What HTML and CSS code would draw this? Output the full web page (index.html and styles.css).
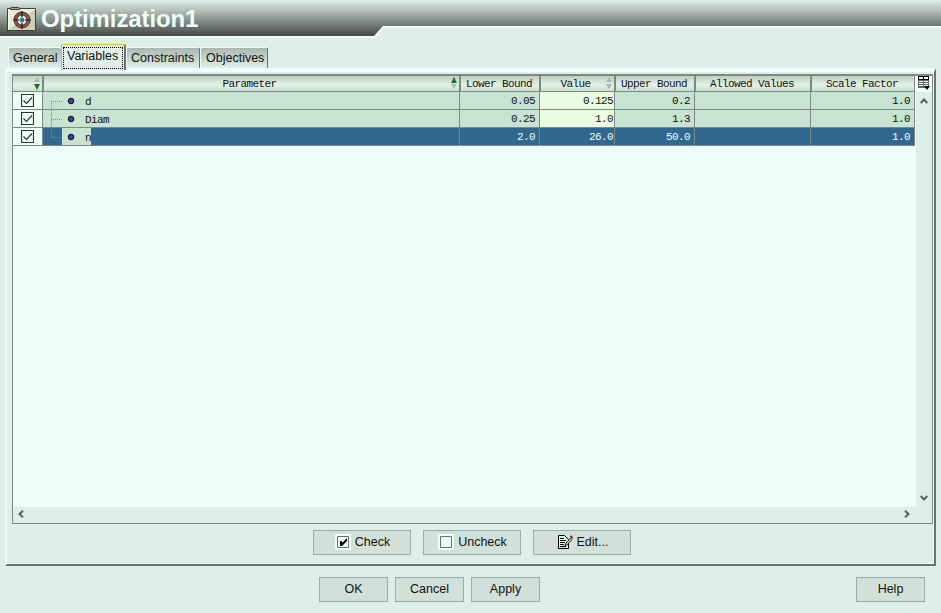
FILE: index.html
```html
<!DOCTYPE html>
<html lang="en">
<head>
  <meta charset="UTF-8">
  <title>Optimization1</title>
  <link rel="stylesheet" href="styles.css">
</head>
<body>
  <header class="banner">
    <div class="banner-fill">
      <svg class="logo" width="30" height="25" viewBox="0 0 30 25">
        <path d="M1 2h27v22H1z" fill="#e6ecd8"/>
        <path d="M1 23L28 2v22H1z" fill="#cbd0b4"/>
        <path d="M1.500 23V2.500H28" fill="none" stroke="#f2f7e4"/>
        <path d="M.5 24V1.500H28.500V23.500H.5" fill="none" stroke="#3e4038"/>
        <path d="M3.500 2.500V1l1-.5h7l1 .5v1.500z" fill="#b5a86f" stroke="#3c3a30"/>
        <circle cx="15" cy="13" r="6.500" fill="#e8f4ee" stroke="#5c3634" stroke-width="4"/>
        <circle cx="15" cy="13" r="6.500" fill="none" stroke="#8d5550" stroke-width="2"/>
        <circle cx="15" cy="13" r="2.500" fill="#467898"/>
        <path d="M15 4v6M15 16v6M6 13h6M18 13h6" stroke="#111" stroke-width="1.200"/>
      </svg>
      <h1>Optimization1</h1>
    </div>
  </header>

  <nav class="tabs">
    <div class="tab general">General</div>
    <div class="tab active"><span>Variables</span></div>
    <div class="tab constraints">Constraints</div>
    <div class="tab objectives">Objectives</div>
  </nav>

  <main class="panel">
    <div class="table-box">
      <div class="grid">
        <div class="row head">
          <div class="sort"><svg width="6" height="13" viewBox="0 0 6 13"><path d="M3 0l3 5H0z" fill="#a9bab2"/><path d="M0 7h6l-3 6z" fill="#246b2c"/></svg></div>
          <div>Parameter<svg width="6" height="13" viewBox="0 0 6 13"><path d="M3 0l3 6H0z" fill="#246b2c"/><path d="M0 7h6l-3 5z" fill="#a9bab2"/></svg></div>
          <div>Lower Bound</div>
          <div>Value<svg width="6" height="13" viewBox="0 0 6 13"><path d="M3 0l3 5H0zM0 7h6l-3 5z" fill="#a9bab2"/></svg></div>
          <div>Upper Bound</div>
          <div>Allowed Values</div>
          <div>Scale Factor</div>
        </div>
        <div class="row">
          <div class="check"><svg width="13" height="13" viewBox="0 0 13 13"><path d="M.5.5h12v12H.5z"/><path d="M2.500 6.500l3 3 5.500-6"/></svg></div>
          <div class="name"><svg width="36" height="17" viewBox="0 0 36 17"><path class="tree" d="M8.500 9v8M8 9.500h11"/><circle cx="28" cy="9" r="2.800"/></svg><span>d</span></div>
          <div>0.05</div>
          <div class="value">0.125</div>
          <div>0.2</div>
          <div></div>
          <div>1.0</div>
        </div>
        <div class="row">
          <div class="check"><svg width="13" height="13" viewBox="0 0 13 13"><path d="M.5.5h12v12H.5z"/><path d="M2.500 6.500l3 3 5.500-6"/></svg></div>
          <div class="name"><svg width="36" height="17" viewBox="0 0 36 17"><path class="tree" d="M8.500 0v17M8 9.500h11"/><circle cx="28" cy="9" r="2.800"/></svg><span>Diam</span></div>
          <div>0.25</div>
          <div class="value">1.0</div>
          <div>1.3</div>
          <div></div>
          <div>1.0</div>
        </div>
        <div class="row selected">
          <div class="check"><svg width="13" height="13" viewBox="0 0 13 13"><path d="M.5.5h12v12H.5z"/><path d="M2.500 6.500l3 3 5.500-6"/></svg></div>
          <div class="name"><svg width="36" height="17" viewBox="0 0 36 17"><path class="back" d="M19 0h17v17H19z"/><path class="tree" d="M8.500 0v9M8 9.500h11"/><circle cx="28" cy="9" r="2.800"/></svg><span>n</span></div>
          <div>2.0</div>
          <div class="value">26.0</div>
          <div>50.0</div>
          <div></div>
          <div>1.0</div>
        </div>
      </div>
      <div class="side">
        <svg class="columns" width="12" height="14" viewBox="0 0 12 14">
          <path d="M0 0h11v4H0z" fill="#000"/>
          <path d="M0 4h11v8H0z" fill="#5f6663"/>
          <path d="M1 1h4v2H1zM6 1h4v2H6zM1 5h4v1H1zM6 5h4v1H6zM1 7h4v1H1zM6 7h4v1H6zM1 9h4v1H1zM6 9h4v1H6z" fill="#eefff8"/>
          <path d="M6 10h6l-3 4z" fill="#000"/>
        </svg>
        <div class="vscroll">
          <svg width="8" height="6" viewBox="0 0 8 6"><path d="M.7 5L4 1.500 7.300 5"/></svg>
          <svg width="8" height="6" viewBox="0 0 8 6"><path d="M.7 1L4 4.500 7.300 1"/></svg>
        </div>
      </div>
      <div class="hscroll">
        <svg width="6" height="8" viewBox="0 0 6 8"><path d="M5 .7L1.500 4 5 7.300"/></svg>
        <svg width="6" height="8" viewBox="0 0 6 8"><path d="M1 .7L4.500 4 1 7.300"/></svg>
      </div>
    </div>
    <div class="actions">
      <button>
        <svg width="16" height="16" viewBox="0 0 16 16"><path d="M0 0h16v16H0z" fill="#eefff8"/><path d="M2.500 2.500h11v11h-11z" fill="none" stroke="#67706c"/><path d="M5 7v5h2l5-5V4L7 9V7z" fill="#000"/></svg>
        Check
      </button>
      <button>
        <svg width="16" height="16" viewBox="0 0 16 16"><path d="M0 0h16v16H0z" fill="#eefff8"/><path d="M2.500 2.500h11v11h-11z" fill="none" stroke="#67706c"/></svg>
        Uncheck
      </button>
      <button>
        <svg width="16" height="16" viewBox="0 0 16 16"><path d="M1.500 1.500h6l4 4v9h-10z" fill="#dfefe8" stroke="#000"/><path d="M3 4.500h4M3 6.500h6M3 8.500h5M3 10.500h4M3 12.500h6" stroke="#000"/><path d="M8 12l1-3 4.500-5 1.500 1.500-5 5.500z" fill="#c9ceb0" stroke="#000" stroke-width=".8"/><path d="M13.500 3.500l2-1" stroke="#8c2442" stroke-width="3"/></svg>
        Edit...
      </button>
    </div>
  </main>

  <footer class="buttons">
    <button>OK</button>
    <button>Cancel</button>
    <button>Apply</button>
    <button class="help">Help</button>
  </footer>
</body>
</html>
```

FILE: styles.css
```css
* {
  box-sizing: border-box;
}
body {
  margin: 0;
  height: 613px;
  overflow: hidden;
  background: #dfefe8;
  color: #111;
  font-family: "Liberation Sans", Arial, sans-serif;
  font-size: 12.5px;
}
svg {
  display: block;
  flex: none;
}
.banner {
  height: 38px;
  background: #eefff8;
  clip-path: polygon(0 0, 100% 0, 100% 28px, 384px 28px, 375px 38px, 0 38px);
}
.banner-fill {
  display: flex;
  height: 36px;
  padding: 7px 0 0 7px;
  background: linear-gradient(#dfefe8, #454846);
  clip-path: polygon(0 0, 100% 0, 100% 26px, 383px 26px, 374px 36px, 0 36px);
}
h1 {
  margin: -2px 0 0 4px;
  color: #eefff8;
  font-size: 24px;
  letter-spacing: -0.1px;
  line-height: 28px;
}
.tabs {
  display: flex;
  align-items: flex-end;
  height: 30px;
  padding-left: 8px;
}
.tab {
  height: 21px;
  padding-left: 5px;
  border-top: 1px solid #eefff8;
  border-left: 1px solid #eefff8;
  border-right: 1px solid #68736e;
  border-radius: 2px 2px 0 0;
  background: linear-gradient(#a9b7b0, #dfefe8);
  line-height: 20px;
  white-space: nowrap;
}
.general {
  width: 53px;
  padding-left: 4px;
  border-right: 0;
}
.constraints {
  width: 74px;
  padding-left: 4px;
}
.objectives {
  width: 68px;
  padding-left: 5px;
}
.active {
  z-index: 1;
  width: 65px;
  height: 26px;
  margin-bottom: -2px;
  padding: 2px 1px;
  border-top: 1px solid #d1bc56;
  border-left: 1px solid #d1bc56;
  border-right: 2px solid #68736e;
  background: #dfefe8;
}
.active span {
  display: block;
  height: 22px;
  padding-left: 3px;
  border: 1px dotted #000;
  line-height: 16px;
}
.panel {
  width: 931px;
  height: 498px;
  margin-left: 5px;
  padding: 2px 1px 0 5px;
  border-top: 4px solid #eefff8;
  border-left: 2px solid #eefff8;
  border-right: 2px solid #68736e;
  border-bottom: 2px solid #68736e;
  box-shadow: inset -1px -1px #eefff8;
}
.table-box {
  display: grid;
  grid-template: 431px 16px / 902px 17px;
  width: 921px;
  border: 1px solid #7c8985;
  border-top-width: 2px;
  background: #eefff8;
}
.row {
  display: grid;
  grid-template: 18px / 30px 417px 80px 75px 80px 116px 104px;
  font-family: "Liberation Mono", monospace;
  font-size: 11px;
  letter-spacing: -0.6px;
  line-height: 18px;
}
.row > div {
  padding-right: 4px;
  border-right: 1px solid #7c8985;
  border-bottom: 1px solid #7c8985;
  background: #c7e3d1;
  text-align: right;
}
.row.head {
  grid-template-rows: 16px;
  line-height: 17px;
}
.head > div {
  display: flex;
  justify-content: center;
  padding: 0 2px 0 0;
  border-left: 1px solid #7c8985;
  background: linear-gradient(#bdcfbf, #e3f2e7 60%, #cbdccf);
}
.head > .sort {
  border-left: 0;
}
.head svg {
  margin: 1px 0 0 auto;
}
/* keep the label centred beside its sort arrows */
.head > div:not(.sort):has(svg)::before {
  content: "";
  margin-right: auto;
  width: 4px;
}
.row > .value {
  padding-right: 1px;
  background: #eafde0;
}
.row > .check {
  padding: 2px 0 0 8px;
  background: #eefff8;
}
.check path {
  fill: none;
  stroke: #333;
  stroke-width: 1.2;
}
.row > .name {
  display: flex;
}
.name span {
  height: 17px;
  padding-left: 6px;
  line-height: 20px;
}
.name circle {
  fill: #3a3f9c;
  stroke: #111;
}
.tree {
  stroke: #7c8985;
  stroke-dasharray: 1 1;
}
.selected > div:not(.check) {
  background: #30688f;
  color: #eefff8;
}
.selected .name span {
  background: #c7e3d1;
  color: #111;
}
.back {
  fill: #c7e3d1;
}
.side {
  display: flex;
  flex-direction: column;
}
.columns {
  margin: 0 0 2px 3px;
}
.vscroll {
  display: flex;
  flex: 1;
  flex-direction: column;
  justify-content: space-between;
  margin-left: 1px;
  padding: 6px 0 6px 4px;
  background: #dfefe8;
}
.hscroll {
  display: flex;
  grid-column: 1 / 3;
  justify-content: space-between;
  padding: 3px 22px 0 5px;
  background: #dfefe8;
}
.vscroll path,
.hscroll path {
  fill: none;
  stroke: #56605c;
  stroke-width: 2;
}
.actions {
  display: flex;
  justify-content: center;
  gap: 12px;
  padding: 6px 2px 0 0;
}
button {
  display: flex;
  align-items: center;
  justify-content: center;
  gap: 4px;
  width: 98px;
  height: 25px;
  padding: 0 0 2px;
  border: 1px solid #9aaba3;
  background: #d1e0d9;
  color: #111;
  font: inherit;
}
.actions button {
  padding-left: 2px;
}
.actions svg {
  margin-top: 1px;
}
.buttons {
  display: flex;
  gap: 7px;
  padding: 11px 16px 0 319px;
}
.buttons button {
  width: 69px;
}
.buttons .help {
  margin-left: auto;
}
```
